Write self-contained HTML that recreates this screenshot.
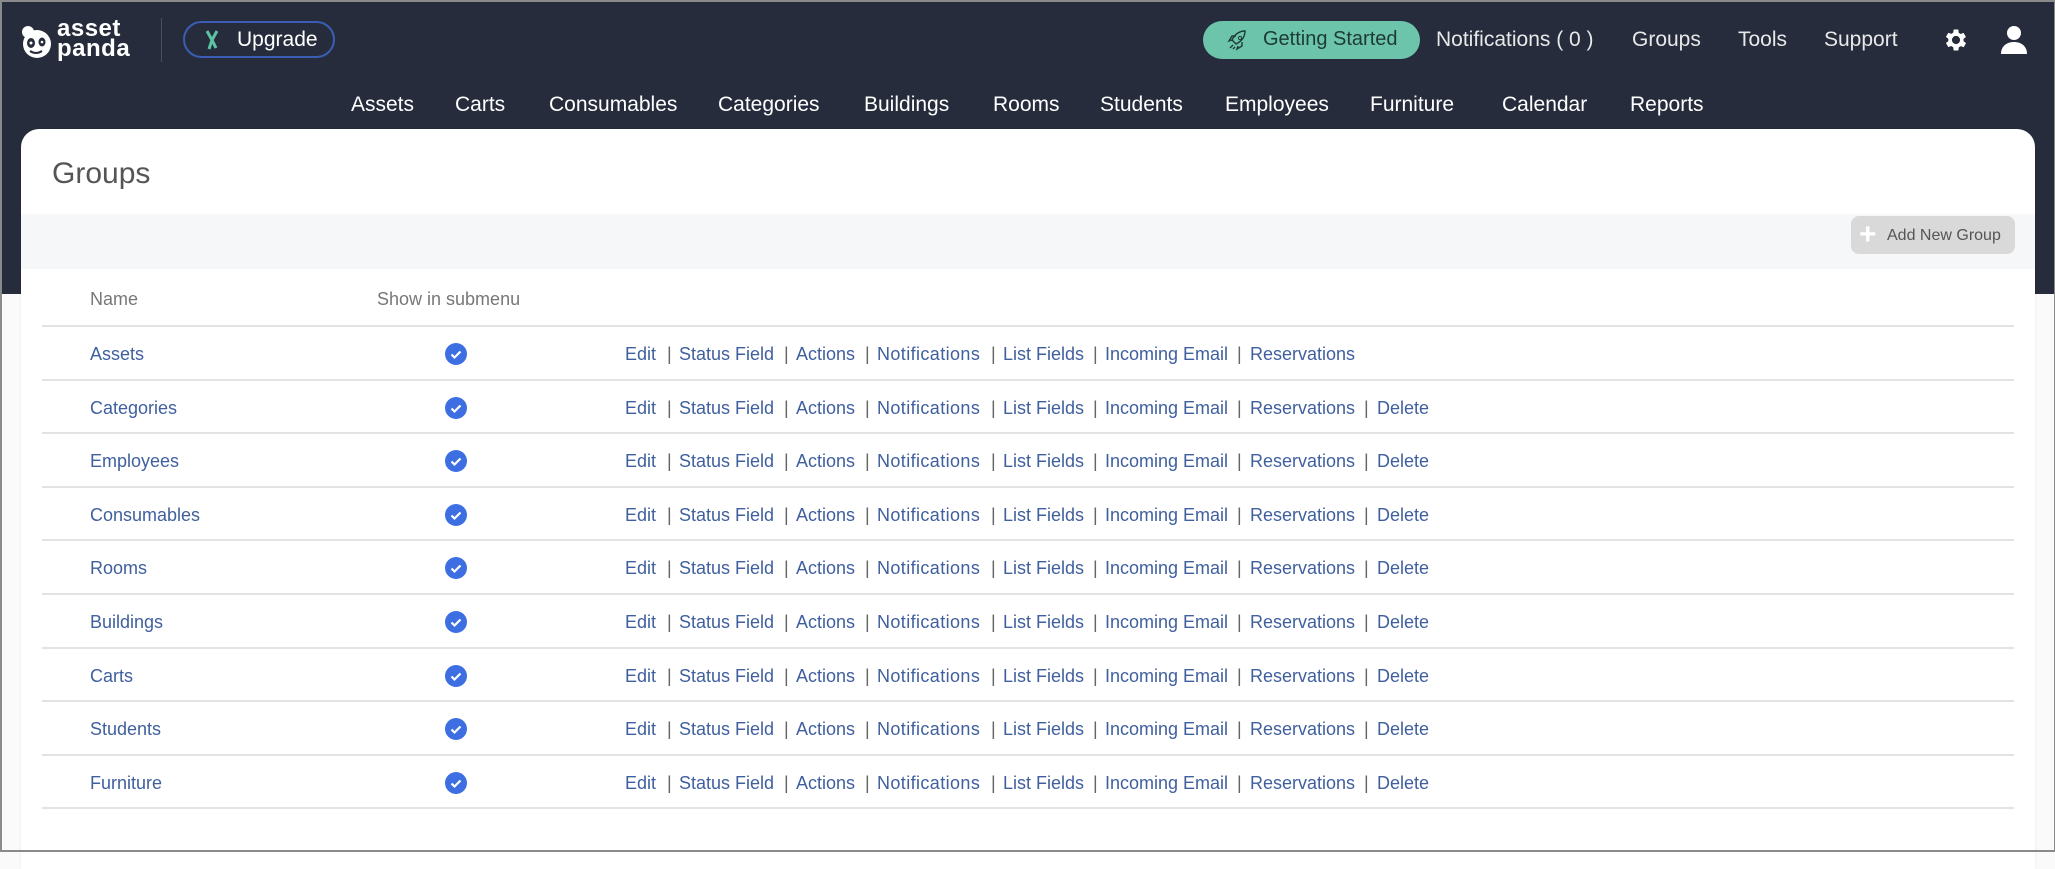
<!DOCTYPE html>
<html><head><meta charset="utf-8"><style>
*{margin:0;padding:0;box-sizing:border-box}
html,body{width:2055px;height:852px;overflow:hidden;background:#fafafa;font-family:"Liberation Sans",sans-serif}
.frame{position:absolute;left:0;top:0;width:2055px;height:852px;border:2px solid #8a8a8a;border-right-width:1px;pointer-events:none;z-index:10}
.hdr{position:absolute;left:0;top:0;width:2055px;height:294px;background:#262c3b}
.abs{position:absolute;white-space:nowrap}
.top{color:#e8e8ea;font-size:21px;top:28px}
.nav{color:#fff;font-size:21px;top:93px}
.card{position:absolute;left:21px;top:129px;width:2014px;height:740px;background:#fff;border-radius:18px 18px 0 0;box-shadow:0 0 3px rgba(0,0,0,.08)}
.row{position:absolute;left:42px;width:1972px;height:53.6px;border-bottom:2px solid #e3e3e3;font-size:18px;line-height:55px}
.row span{position:absolute;color:#3f5f9e}
.row i{position:absolute;font-style:normal;color:#666}
.nm{left:48px}
.ck{position:absolute;left:403px;top:16px;width:22px;height:22px;border-radius:50%;background:#3d6fe3}
.ck svg{display:block}
.a1{left:583px}.a2{left:637px}.a3{left:754px}.a4{left:835px;letter-spacing:0.4px}.a5{left:961px}.a6{left:1063px}.a7{left:1208px}.a8{left:1335px}
.s1{left:625px}.s2{left:742px}.s3{left:823px}.s4{left:949px}.s5{left:1051px}.s6{left:1195px}.s7{left:1322px}
</style></head><body>
<div class="hdr"></div>
<svg class="abs" style="left:20px;top:24px" width="34" height="36" viewBox="0 0 34 36">
<circle cx="8" cy="8" r="6" fill="#fff"/><circle cx="17" cy="20" r="14" fill="#fff"/>
<ellipse cx="11" cy="19" rx="4" ry="5" fill="#262c3b"/><ellipse cx="22" cy="18" rx="3.5" ry="4.5" fill="#262c3b"/>
<circle cx="11" cy="19" r="1.5" fill="#fff"/><circle cx="22" cy="18" r="1.3" fill="#fff"/>
<path d="M10 27q6 4 12 0" stroke="#262c3b" stroke-width="2" fill="none"/></svg>
<div class="abs" style="left:57px;top:19px;color:#fff;font-weight:bold;font-size:24px;line-height:20px;letter-spacing:0.5px">asset<br>panda</div>
<div class="abs" style="left:161px;top:18px;width:1px;height:44px;background:#4a5060"></div>
<div class="abs" style="left:183px;top:21px;width:152px;height:37px;border:2px solid #3b5db5;border-radius:19px"></div>
<svg class="abs" style="left:204px;top:29px" width="16" height="22" viewBox="0 0 16 22"><path d="M3 2l5 9-3 9M13 2l-5 9 4 8" stroke="#5cc4a5" stroke-width="3" fill="none"/></svg>
<div class="abs" style="left:237px;top:28px;color:#fff;font-size:21px">Upgrade</div>
<div class="abs" style="left:1203px;top:21px;width:217px;height:38px;background:#6cc4ab;border-radius:19px"></div>
<svg class="abs" style="left:1227px;top:29px" width="22" height="22" viewBox="0 0 22 22"><path d="M8 14l-3-3c3-6 7-9 13-9 0 6-3 10-9 13zM5 11l-3 1 3-5h4M11 17l-1 3 5-3v-4M6 16l-3 3M8 18l-2 2" stroke="#1f3a37" stroke-width="1.4" fill="none"/><circle cx="13" cy="9" r="1.6" stroke="#1f3a37" fill="none"/></svg>
<div class="abs" style="left:1263px;top:28px;color:#1d3a36;font-size:20px">Getting Started</div>
<div class="abs top" style="left:1436px">Notifications ( 0 )</div>
<div class="abs top" style="left:1632px">Groups</div>
<div class="abs top" style="left:1738px">Tools</div>
<div class="abs top" style="left:1824px">Support</div>
<svg class="abs" style="left:1942px;top:26px" width="28" height="28" viewBox="0 0 24 24"><path fill="#fff" d="M19.4 13a7.5 7.5 0 000-2l2.1-1.6-2-3.5-2.5 1a7 7 0 00-1.7-1L15 3h-4l-.4 2.8a7 7 0 00-1.7 1l-2.5-1-2 3.5L6.5 11a7.5 7.5 0 000 2l-2.1 1.6 2 3.5 2.5-1a7 7 0 001.7 1L11 21h4l.4-2.8a7 7 0 001.7-1l2.5 1 2-3.5zM13 15.5a3.5 3.5 0 110-7 3.5 3.5 0 010 7z" transform="translate(-1 0)"/></svg>
<svg class="abs" style="left:2000px;top:25px" width="28" height="30" viewBox="0 0 28 30"><circle cx="14" cy="8" r="7" fill="#fff"/><path d="M1 29c0-8 6-12 13-12s13 4 13 12z" fill="#fff"/></svg>
<div class="abs nav" style="left:351px">Assets</div>
<div class="abs nav" style="left:455px">Carts</div>
<div class="abs nav" style="left:549px">Consumables</div>
<div class="abs nav" style="left:718px">Categories</div>
<div class="abs nav" style="left:864px">Buildings</div>
<div class="abs nav" style="left:993px">Rooms</div>
<div class="abs nav" style="left:1100px">Students</div>
<div class="abs nav" style="left:1225px">Employees</div>
<div class="abs nav" style="left:1370px">Furniture</div>
<div class="abs nav" style="left:1502px">Calendar</div>
<div class="abs nav" style="left:1630px">Reports</div>

<div class="card"></div>
<div class="abs" style="left:52px;top:157px;color:#555;font-size:30px;font-weight:300">Groups</div>
<div class="abs" style="left:21px;top:214px;width:2014px;height:55px;background:#f6f7f9"></div>
<div class="abs" style="left:1851px;top:216px;width:164px;height:38px;background:#d9d9d9;border-radius:8px"></div>
<div class="abs" style="left:1859px;top:221px;color:#fff;font-size:30px;font-weight:bold;line-height:28px">+</div>
<div class="abs" style="left:1887px;top:227px;color:#555;font-size:16px">Add New Group</div>
<div class="abs" style="left:90px;top:289px;color:#777;font-size:18px">Name</div>
<div class="abs" style="left:377px;top:289px;color:#777;font-size:18px">Show in submenu</div>
<div class="abs" style="left:42px;top:325px;width:1972px;height:2px;background:#e3e3e3"></div>

<div class="row" style="top:327px"><span class="nm">Assets</span><div class="ck"><svg width="22" height="22"><path d="M6.5 11.5l3 3 6-6" stroke="#fff" stroke-width="2.2" fill="none"/></svg></div><span class="a1">Edit</span><i class="s1">|</i><span class="a2">Status Field</span><i class="s2">|</i><span class="a3">Actions</span><i class="s3">|</i><span class="a4">Notifications</span><i class="s4">|</i><span class="a5">List Fields</span><i class="s5">|</i><span class="a6">Incoming Email</span><i class="s6">|</i><span class="a7">Reservations</span></div>
<div class="row" style="top:380.6px"><span class="nm">Categories</span><div class="ck"><svg width="22" height="22"><path d="M6.5 11.5l3 3 6-6" stroke="#fff" stroke-width="2.2" fill="none"/></svg></div><span class="a1">Edit</span><i class="s1">|</i><span class="a2">Status Field</span><i class="s2">|</i><span class="a3">Actions</span><i class="s3">|</i><span class="a4">Notifications</span><i class="s4">|</i><span class="a5">List Fields</span><i class="s5">|</i><span class="a6">Incoming Email</span><i class="s6">|</i><span class="a7">Reservations</span><i class="s7">|</i><span class="a8">Delete</span></div>
<div class="row" style="top:434.2px"><span class="nm">Employees</span><div class="ck"><svg width="22" height="22"><path d="M6.5 11.5l3 3 6-6" stroke="#fff" stroke-width="2.2" fill="none"/></svg></div><span class="a1">Edit</span><i class="s1">|</i><span class="a2">Status Field</span><i class="s2">|</i><span class="a3">Actions</span><i class="s3">|</i><span class="a4">Notifications</span><i class="s4">|</i><span class="a5">List Fields</span><i class="s5">|</i><span class="a6">Incoming Email</span><i class="s6">|</i><span class="a7">Reservations</span><i class="s7">|</i><span class="a8">Delete</span></div>
<div class="row" style="top:487.8px"><span class="nm">Consumables</span><div class="ck"><svg width="22" height="22"><path d="M6.5 11.5l3 3 6-6" stroke="#fff" stroke-width="2.2" fill="none"/></svg></div><span class="a1">Edit</span><i class="s1">|</i><span class="a2">Status Field</span><i class="s2">|</i><span class="a3">Actions</span><i class="s3">|</i><span class="a4">Notifications</span><i class="s4">|</i><span class="a5">List Fields</span><i class="s5">|</i><span class="a6">Incoming Email</span><i class="s6">|</i><span class="a7">Reservations</span><i class="s7">|</i><span class="a8">Delete</span></div>
<div class="row" style="top:541.4px"><span class="nm">Rooms</span><div class="ck"><svg width="22" height="22"><path d="M6.5 11.5l3 3 6-6" stroke="#fff" stroke-width="2.2" fill="none"/></svg></div><span class="a1">Edit</span><i class="s1">|</i><span class="a2">Status Field</span><i class="s2">|</i><span class="a3">Actions</span><i class="s3">|</i><span class="a4">Notifications</span><i class="s4">|</i><span class="a5">List Fields</span><i class="s5">|</i><span class="a6">Incoming Email</span><i class="s6">|</i><span class="a7">Reservations</span><i class="s7">|</i><span class="a8">Delete</span></div>
<div class="row" style="top:595px"><span class="nm">Buildings</span><div class="ck"><svg width="22" height="22"><path d="M6.5 11.5l3 3 6-6" stroke="#fff" stroke-width="2.2" fill="none"/></svg></div><span class="a1">Edit</span><i class="s1">|</i><span class="a2">Status Field</span><i class="s2">|</i><span class="a3">Actions</span><i class="s3">|</i><span class="a4">Notifications</span><i class="s4">|</i><span class="a5">List Fields</span><i class="s5">|</i><span class="a6">Incoming Email</span><i class="s6">|</i><span class="a7">Reservations</span><i class="s7">|</i><span class="a8">Delete</span></div>
<div class="row" style="top:648.6px"><span class="nm">Carts</span><div class="ck"><svg width="22" height="22"><path d="M6.5 11.5l3 3 6-6" stroke="#fff" stroke-width="2.2" fill="none"/></svg></div><span class="a1">Edit</span><i class="s1">|</i><span class="a2">Status Field</span><i class="s2">|</i><span class="a3">Actions</span><i class="s3">|</i><span class="a4">Notifications</span><i class="s4">|</i><span class="a5">List Fields</span><i class="s5">|</i><span class="a6">Incoming Email</span><i class="s6">|</i><span class="a7">Reservations</span><i class="s7">|</i><span class="a8">Delete</span></div>
<div class="row" style="top:702.2px"><span class="nm">Students</span><div class="ck"><svg width="22" height="22"><path d="M6.5 11.5l3 3 6-6" stroke="#fff" stroke-width="2.2" fill="none"/></svg></div><span class="a1">Edit</span><i class="s1">|</i><span class="a2">Status Field</span><i class="s2">|</i><span class="a3">Actions</span><i class="s3">|</i><span class="a4">Notifications</span><i class="s4">|</i><span class="a5">List Fields</span><i class="s5">|</i><span class="a6">Incoming Email</span><i class="s6">|</i><span class="a7">Reservations</span><i class="s7">|</i><span class="a8">Delete</span></div>
<div class="row" style="top:755.8px"><span class="nm">Furniture</span><div class="ck"><svg width="22" height="22"><path d="M6.5 11.5l3 3 6-6" stroke="#fff" stroke-width="2.2" fill="none"/></svg></div><span class="a1">Edit</span><i class="s1">|</i><span class="a2">Status Field</span><i class="s2">|</i><span class="a3">Actions</span><i class="s3">|</i><span class="a4">Notifications</span><i class="s4">|</i><span class="a5">List Fields</span><i class="s5">|</i><span class="a6">Incoming Email</span><i class="s6">|</i><span class="a7">Reservations</span><i class="s7">|</i><span class="a8">Delete</span></div>
<div class="frame"></div>
</body></html>
